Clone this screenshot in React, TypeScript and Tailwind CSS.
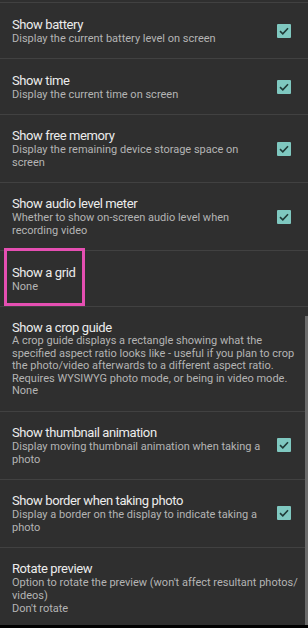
import React from "react";

type Row = { title: string; lines: string[]; check?: boolean; tight?: boolean };

const rows: Row[] = [
  { title: "Show battery", lines: ["Display the current battery level on screen"], check: true },
  { title: "Show time", lines: ["Display the current time on screen"], check: true },
  { title: "Show free memory", lines: ["Display the remaining device storage space on", "screen"], check: true },
  { title: "Show audio level meter", lines: ["Whether to show on-screen audio level when", "recording video"], check: true },
  { title: "Show a grid", lines: ["None"] },
  {
    title: "Show a crop guide",
    tight: true,
    lines: [
      "A crop guide displays a rectangle showing what the",
      "specified aspect ratio looks like - useful if you plan to crop",
      "the photo/video afterwards to a different aspect ratio.",
      "Requires WYSIWYG photo mode, or being in video mode.",
      "None",
    ],
  },
  { title: "Show thumbnail animation", lines: ["Display moving thumbnail animation when taking a", "photo"], check: true },
  { title: "Show border when taking photo", lines: ["Display a border on the display to indicate taking a", "photo"], check: true },
  { title: "Rotate preview", lines: ["Option to rotate the preview (won't affect resultant photos/", "videos)", "Don't rotate"] },
];

function Check() {
  return (
    <div className="w-[14px] h-[14px] rounded-[1px] bg-[#7fc8c0] flex items-center justify-center shrink-0">
      <svg width="10" height="8" viewBox="0 0 10 8">
        <path d="M1 4.2 L3.8 6.8 L9 1.2" stroke="#1f3a37" strokeWidth="1.6" fill="none" />
      </svg>
    </div>
  );
}

export default function App() {
  return (
    <div
      className="relative w-[308px] h-[628px] overflow-hidden bg-[#2f2f2f]"
      style={{ fontFamily: "Roboto, 'Noto Sans', sans-serif" }}
    >
      <div className="h-[2px]" />
      {rows.map((r, i) => (
        <div
          key={i}
          className="border-t border-[#414141] min-h-[56px] py-[13px] pl-3 pr-4 flex items-center"
        >
          <div className="flex-1 min-w-0">
            <div className="text-[13px] leading-[15px] tracking-[-0.4px] text-[#ececec] whitespace-nowrap">
              {r.title}
            </div>
            {r.lines.map((l, j) => (
              <div
                key={j}
                className={`text-[11px] text-[#b4b4b4] whitespace-nowrap ${
                  r.tight ? "leading-[12.5px]" : "leading-[13px]"
                }`}
              >
                {l}
              </div>
            ))}
          </div>
          {r.check && (
            <div className="ml-2 mr-[1px]">
              <Check />
            </div>
          )}
        </div>
      ))}
      {/* highlight box */}
      <div className="absolute left-[4px] top-[248px] w-[81px] h-[58px] border-[3px] border-[#e54fb2]" />
      {/* scrollbar */}
      <div className="absolute right-0 top-[316px] w-[3px] h-[309px] bg-[#6b6b6b]" />
      {/* bottom black strip */}
      <div className="absolute left-0 bottom-0 w-full h-[3px] bg-black" />
    </div>
  );
}
